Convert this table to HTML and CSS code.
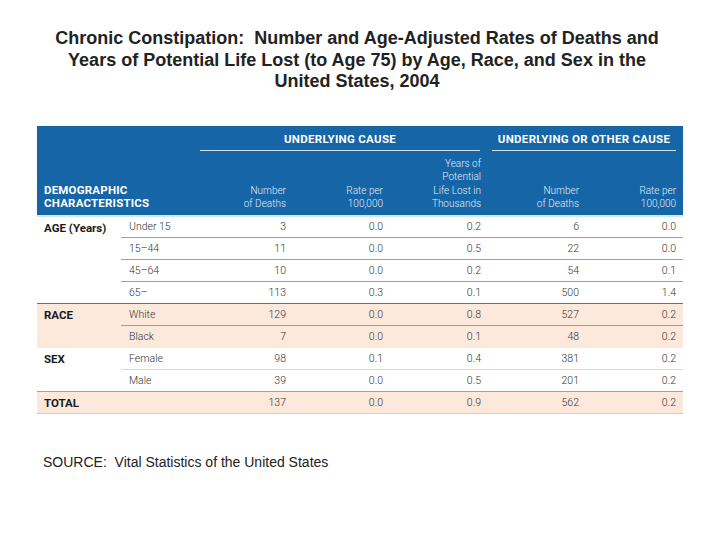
FILE: index.html
```html
<!DOCTYPE html>
<html>
<head>
<meta charset="utf-8">
<link rel="stylesheet" href="styles.css">
</head>
<body>
<div class="page">
  <h1 class="title">Chronic Constipation:&nbsp; Number and Age-Adjusted Rates of Deaths and<br>Years of Potential Life Lost (to Age 75) by Age, Race, and Sex in the<br>United States, 2004</h1>
  <table class="data">
    <colgroup>
      <col class="c1"><col class="c2"><col class="c3"><col class="c4"><col class="c5"><col class="c6"><col class="c7">
    </colgroup>
    <thead>
      <tr class="hrow1">
        <th colspan="2"></th>
        <th colspan="3" class="cause"><span class="cause-a">UNDERLYING CAUSE</span></th>
        <th colspan="2" class="cause"><span class="cause-b">UNDERLYING OR OTHER CAUSE</span></th>
      </tr>
      <tr class="hrow2">
        <th colspan="2" class="demo">DEMOGRAPHIC<br>CHARACTERISTICS</th>
        <th class="num">Number<br>of Deaths</th>
        <th class="num">Rate per<br>100,000</th>
        <th class="num">Years of<br>Potential<br>Life Lost in<br>Thousands</th>
        <th class="num">Number<br>of Deaths</th>
        <th class="num">Rate per<br>100,000</th>
      </tr>
    </thead>
    <tbody>
      <tr class="first">
        <td class="grp" rowspan="4">AGE (Years)</td>
        <td class="sub">Under 15</td><td>3</td><td>0.0</td><td>0.2</td><td>6</td><td>0.0</td>
      </tr>
      <tr class="inner"><td class="sub">15–44</td><td>11</td><td>0.0</td><td>0.5</td><td>22</td><td>0.0</td></tr>
      <tr class="inner"><td class="sub">45–64</td><td>10</td><td>0.0</td><td>0.2</td><td>54</td><td>0.1</td></tr>
      <tr class="inner"><td class="sub">65–</td><td>113</td><td>0.3</td><td>0.1</td><td>500</td><td>1.4</td></tr>
      <tr class="peach groupstart">
        <td class="grp" rowspan="2">RACE</td>
        <td class="sub">White</td><td>129</td><td>0.0</td><td>0.8</td><td>527</td><td>0.2</td>
      </tr>
      <tr class="peach inner"><td class="sub">Black</td><td>7</td><td>0.0</td><td>0.1</td><td>48</td><td>0.2</td></tr>
      <tr class="groupstart plain">
        <td class="grp" rowspan="2">SEX</td>
        <td class="sub">Female</td><td>98</td><td>0.1</td><td>0.4</td><td>381</td><td>0.2</td>
      </tr>
      <tr class="inner light"><td class="sub">Male</td><td>39</td><td>0.0</td><td>0.5</td><td>201</td><td>0.2</td></tr>
      <tr class="peach total">
        <td class="grp">TOTAL</td>
        <td class="sub"></td><td>137</td><td>0.0</td><td>0.9</td><td>562</td><td>0.2</td>
      </tr>
    </tbody>
  </table>
  <p class="source">SOURCE:&nbsp; Vital Statistics of the United States</p>
</div>
</body>
</html>
```

FILE: styles.css
```css
html, body {
  margin: 0;
  padding: 0;
  background: #ffffff;
}
.page {
  width: 720px;
  height: 540px;
  padding-top: 28px;
  box-sizing: border-box;
}
.title {
  margin: 0;
  text-align: center;
  font-family: "Liberation Sans", Arial, sans-serif;
  font-weight: bold;
  font-size: 18px;
  line-height: 21.5px;
  color: #222222;
  width: 714px;
}
.data {
  margin: 33px 0 0 37px;
  border-collapse: collapse;
  table-layout: fixed;
  width: 646px;
  font-family: Roboto, "Liberation Sans", sans-serif;
}
.c1 { width: 84px; }
.c2 { width: 79px; }
.c3 { width: 93px; }
.c4 { width: 97px; }
.c5 { width: 98px; }
.c6 { width: 98px; }
.c7 { width: 97px; }

thead th {
  background: #1565a7;
  color: #ffffff;
  padding: 0;
}
.hrow1 th {
  height: 25px;
  box-sizing: border-box;
  vertical-align: top;
}
.cause span {
  display: block;
  font-weight: bold;
  font-size: 11.5px;
  letter-spacing: 0.3px;
  text-align: center;
  padding-top: 6px;
  height: 18px;
  line-height: 14px;
  border-bottom: 1px solid #cfe3f3;
}
.cause-a { margin: 0 8px 0 0; }
.cause-b { margin: 0 7px 0 4px; }
.hrow2 th {
  height: 65px;
  box-sizing: border-box;
  vertical-align: bottom;
  padding-bottom: 4px;
  font-size: 10px;
  line-height: 13.5px;
}
.hrow2 .num {
  text-align: right;
  padding-right: 7px;
  font-weight: 300;
  color: #e3edf7;
}
.hrow2 .demo {
  text-align: left;
  padding-left: 7px;
  font-weight: bold;
  font-size: 11.5px;
  letter-spacing: 0.2px;
}

tbody td {
  height: 22px;
  box-sizing: border-box;
  padding: 0 7px 0 0;
  font-size: 10.5px;
  font-weight: 300;
  color: #333333;
  text-align: right;
  vertical-align: middle;
}
tbody td.grp {
  text-align: left;
  padding-left: 7px;
  font-weight: bold;
  font-size: 11.5px;
  color: #1a1a1a;
  vertical-align: top;
  padding-top: 4px;
}
tbody td.sub {
  text-align: left;
  padding-left: 8px;
}
tr.first td {
  border-top: 2px solid #c9ecf6;
}
tr.inner td {
  border-top: 1px solid #8fa3b3;
}
tr.inner.light td {
  border-top: 1px solid #d3dbe1;
}
tr.groupstart td {
  border-top: 1px solid #5d7184;
}
tr.groupstart.plain td {
  border-top: 0;
}
tr.total td {
  border-top: 1px solid #a3a3a3;
  border-bottom: 1px solid #c6ced6;
}
tr.peach td {
  background: #fde9dc;
}
.source {
  margin: 40px 0 0 43px;
  font-family: "Liberation Sans", Arial, sans-serif;
  font-size: 14px;
  color: #222222;
}
```
